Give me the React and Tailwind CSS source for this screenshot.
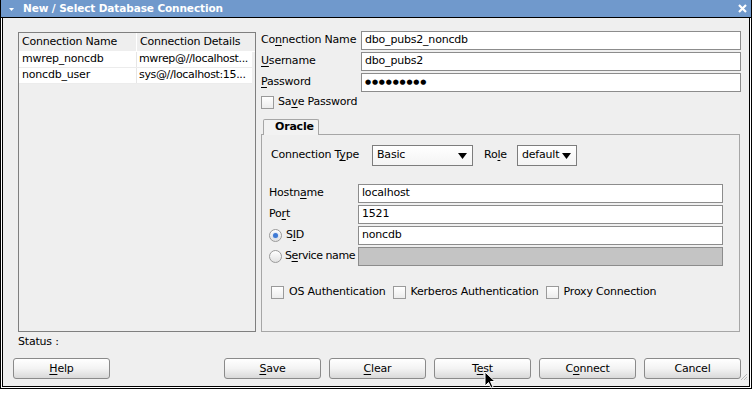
import React from "react";

function Mn({ children }) {
  return <u className="underline underline-offset-[2px]">{children}</u>;
}

function Field({ value, w, gray }) {
  return (
    <div
      className={`h-[19px] ${w} border border-[#8c8c8c] flex items-center pl-[3px] whitespace-nowrap ${
        gray ? "bg-[#c4c4c4]" : "bg-white"
      }`}
    >
      {value}
    </div>
  );
}

function Check({ label }) {
  return (
    <div className="flex items-center gap-[5px] whitespace-nowrap">
      <span className="w-[13px] h-[13px] border border-[#9a9a9a] bg-gradient-to-b from-white to-[#ececec]" />
      <span>{label}</span>
    </div>
  );
}

function Radio({ on }) {
  return (
    <span className="shrink-0 w-[13px] h-[13px] rounded-full border border-[#9a9a9a] bg-gradient-to-b from-white to-[#e2e2e2] flex items-center justify-center">
      {on && <span className="w-[5px] h-[5px] rounded-full bg-[#3f7ad4] shadow-[0_0_2px_#9bbcf0]" />}
    </span>
  );
}

function Select({ value, w }) {
  return (
    <div
      className={`h-[21px] ${w} border border-[#7d7d7d] bg-gradient-to-b from-white to-[#f4f4f4] flex items-center justify-between pl-[4px] pr-[5px]`}
    >
      <span>{value}</span>
      <svg width="9" height="6" viewBox="0 0 9 6">
        <path d="M0 0 L9 0 L4.5 6 Z" fill="#000" />
      </svg>
    </div>
  );
}

function Btn({ children }) {
  return (
    <button className="w-[97px] h-[21px] rounded-[3px] border border-[#8a8a8a] bg-gradient-to-b from-white via-[#f3f3f3] to-[#d9d9d9] text-center leading-none">
      {children}
    </button>
  );
}

const connections = [
  { name: "mwrep_noncdb", details: "mwrep@//localhost..." },
  { name: "noncdb_user", details: "sys@//localhost:15..." },
];

export default function App() {
  return (
    <div className="relative w-[753px] h-[394px] bg-white text-black text-[11px] tracking-[-0.2px] font-['DejaVu_Sans',sans-serif]">
      <div className="w-[752px] h-[389px] flex flex-col border-x border-b border-black">
        {/* title bar */}
        <div className="h-[17px] bg-[#7099cc] flex items-center text-white">
          <svg width="22" height="16" viewBox="0 0 22 16">
            <path d="M8 7 L13 7 L10.5 10 Z" fill="#fff" />
          </svg>
          <span className="font-bold text-[10.5px] tracking-[-0.1px] whitespace-nowrap">
            New / Select Database Connection
          </span>
          <svg className="ml-auto mr-[4px]" width="9" height="9" viewBox="0 0 9 9">
            <path d="M1 1 L8 8 M8 1 L1 8" stroke="#fff" strokeWidth="2.2" />
          </svg>
        </div>

        <div className="flex-1 border-t border-black flex flex-col">
          <div className="flex-1 border-x border-b border-white flex flex-col">
            <div className="flex-1 border-x border-b border-black bg-[#efefef] flex flex-col">
              {/* main area */}
              <div className="flex pt-[13px] pl-[15px]">
                <div className="mt-[1px] w-[238px] h-[300px] border border-[#7f7f7f] bg-[#efefef] flex flex-col">
                  <div className="flex h-[19px] border-b border-white bg-[#eeeeee]">
                    <div className="w-[118px] border-r border-white pl-[3px] flex items-center whitespace-nowrap">
                      Connection Name
                    </div>
                    <div className="flex-1 pl-[3px] flex items-center whitespace-nowrap">Connection Details</div>
                  </div>
                  {connections.map((c) => (
                    <div key={c.name} className="flex h-[16px] mr-[3px] bg-white border-b border-[#ececec]">
                      <div className="w-[118px] border-r border-[#e6e6e6] pl-[3px] flex items-center whitespace-nowrap overflow-hidden">
                        {c.name}
                      </div>
                      <div className="flex-1 pl-[2px] flex items-center whitespace-nowrap overflow-hidden tracking-[-0.35px]">
                        {c.details}
                      </div>
                    </div>
                  ))}
                </div>

                <div className="ml-[5px] w-[480px] flex flex-col">
                  <div className="flex flex-col gap-[2px]">
                    <div className="flex items-center">
                      <span className="w-[100px] whitespace-nowrap">Co<Mn>n</Mn>nection Name</span>
                      <Field value="dbo_pubs2_noncdb" w="w-[380px]" />
                    </div>
                    <div className="flex items-center">
                      <span className="w-[100px]"><Mn>U</Mn>sername</span>
                      <Field value="dbo_pubs2" w="w-[380px]" />
                    </div>
                    <div className="flex items-center">
                      <span className="w-[100px]"><Mn>P</Mn>assword</span>
                      <Field
                        value={<span className="text-[7px] tracking-[0.8px]">●●●●●●●●●</span>}
                        w="w-[380px]"
                      />
                    </div>
                  </div>

                  <div className="mt-[4px] flex items-center gap-[4px] h-[13px]">
                    <span className="w-[13px] h-[13px] border border-[#9a9a9a] bg-gradient-to-b from-white to-[#ececec]" />
                    <span>Sa<Mn>v</Mn>e Password</span>
                  </div>

                  {/* tab */}
                  <div className="mt-[10px] ml-[2px] w-[56px] h-[16px] border-x border-t border-[#a6a6a6] rounded-t-[2px] bg-[#f2f2f2] font-bold flex items-center pl-[11px] -mb-[1px] relative z-10">
                    Oracle
                  </div>
                  <div className="w-[479px] h-[198px] border border-[#a6a6a6] flex flex-col">
                    <div className="mt-[10px] pl-[9px] flex items-center">
                      <span className="w-[101px] whitespace-nowrap">Connection T<Mn>y</Mn>pe</span>
                      <Select value="Basic" w="w-[101px]" />
                      <span className="ml-[11px] w-[33px]">Ro<Mn>l</Mn>e</span>
                      <Select value="default" w="w-[60px]" />
                    </div>

                    <div className="mt-[18px] pl-[7px] flex flex-col gap-[2px]">
                      <div className="flex items-center">
                        <span className="w-[89px]">Hostn<Mn>a</Mn>me</span>
                        <Field value="localhost" w="w-[365px]" />
                      </div>
                      <div className="flex items-center">
                        <span className="w-[89px]">Po<Mn>r</Mn>t</span>
                        <Field value="1521" w="w-[365px]" />
                      </div>
                      <div className="flex items-center">
                        <span className="w-[89px] flex items-center gap-[4px]">
                          <Radio on />
                          <span>S<Mn>I</Mn>D</span>
                        </span>
                        <Field value="noncdb" w="w-[365px]" />
                      </div>
                      <div className="flex items-center">
                        <span className="w-[89px] shrink-0 flex items-center gap-[3px] whitespace-nowrap tracking-[-0.45px]">
                          <Radio />
                          <span>S<Mn>e</Mn>rvice name</span>
                        </span>
                        <Field value="" w="w-[365px]" gray />
                      </div>
                    </div>

                    <div className="mt-[18px] pl-[9px] flex items-center gap-[7px]">
                      <Check label="OS Authentication" />
                      <Check label="Kerberos Authentication" />
                      <Check label="Proxy Connection" />
                    </div>
                  </div>
                </div>
              </div>

              <div className="mt-[4px] pl-[15px] h-[13px] flex items-center">Status :</div>

              {/* buttons */}
              <div className="relative mt-[9px] pl-[10px] flex">
                <Btn><Mn>H</Mn>elp</Btn>
                <div className="ml-[114px] flex gap-[8px]">
                  <Btn><Mn>S</Mn>ave</Btn>
                  <Btn><Mn>C</Mn>lear</Btn>
                  <Btn>T<Mn>e</Mn>st</Btn>
                  <Btn>C<Mn>o</Mn>nnect</Btn>
                  <Btn>Cancel</Btn>
                </div>
                <svg className="absolute right-[1px] top-[15px]" width="8" height="8" viewBox="0 0 8 8">
                  <path d="M7 1 L1 7 M7 4 L4 7 M7 6.5 L6.5 7" stroke="#b8b8b8" strokeWidth="1" />
                </svg>
              </div>
            </div>
          </div>
        </div>
      </div>

      {/* mouse pointer */}
      <svg className="absolute left-[484px] top-[371px]" width="13" height="19" viewBox="0 0 13 19">
        <path d="M1 1 L1 15 L4.5 11.5 L7 17 L9 16 L6.5 10.5 L11 10.5 Z" fill="#000" stroke="#fff" strokeWidth="1" />
      </svg>
    </div>
  );
}
